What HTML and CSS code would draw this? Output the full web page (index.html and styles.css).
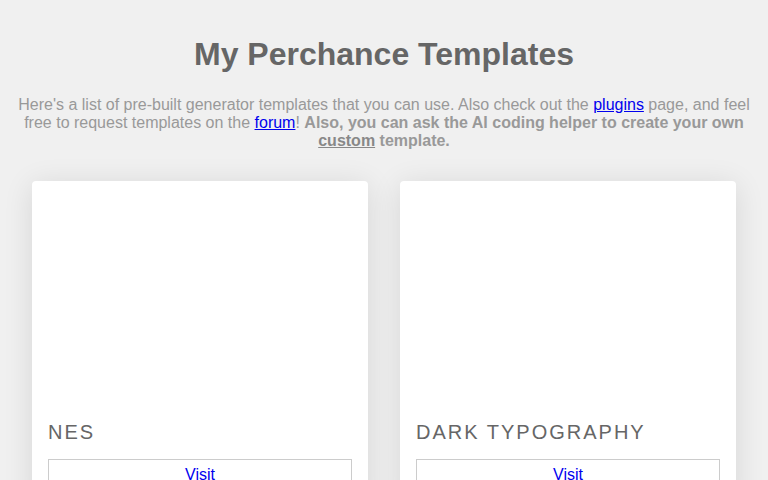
FILE: index.html
```html
<!DOCTYPE html>
<html lang="en">
<head>
<meta charset="utf-8">
<title>My Perchance Templates</title>
<link rel="stylesheet" href="styles.css">
</head>
<body>
<h1 class="title">My Perchance Templates</h1>
<p class="intro">Here's a list of pre-built generator templates that you can use. Also check out the <a href="#">plugins</a> page, and feel free to request templates on the <a href="#">forum</a>! <b>Also, you can ask the AI coding helper to create your own <a class="custom" href="#">custom</a> template.</b></p>
<div class="cards">
  <div class="card">
    <div class="thumb"></div>
    <h2 class="card-title">NES</h2>
    <a class="visit" href="#">Visit</a>
  </div>
  <div class="card">
    <div class="thumb"></div>
    <h2 class="card-title">Dark Typography</h2>
    <a class="visit" href="#">Visit</a>
  </div>
</div>
</body>
</html>
```
FILE: styles.css
```css
html, body {
  background: #f0f0f0;
}
body {
  margin: 0;
  padding: 0 8px;
  font-family: "Liberation Sans", Arial, sans-serif;
  color: #999;
}
.title {
  margin: 36px 0 23px;
  text-align: center;
  font-size: 32px;
  font-weight: bold;
  color: #666;
}
.intro {
  margin: 0;
  text-align: center;
  font-size: 16px;
  line-height: normal;
  color: #999;
}
.intro a {
  color: #0000ee;
}
.intro b {
  color: #999;
}
.intro a.custom {
  color: #888;
}
.cards {
  margin-top: 31px;
  padding: 0 24px;
  display: grid;
  grid-template-columns: 1fr 1fr;
  gap: 32px;
}
.card {
  background: #fff;
  border-radius: 4px;
  box-shadow: 0 4px 30px rgba(0, 0, 0, 0.11);
  padding: 16px;
}
.thumb {
  height: 208px;
}
.card-title {
  margin: 16px 0 15px;
  font-size: 20px;
  font-weight: normal;
  line-height: 23px;
  letter-spacing: 2px;
  text-transform: uppercase;
  color: #666;
}
.visit {
  display: block;
  border: 1px solid #ccc;
  padding: 6px 0;
  text-align: center;
  font-size: 16px;
  color: #0000ee;
  text-decoration: none;
}
```
